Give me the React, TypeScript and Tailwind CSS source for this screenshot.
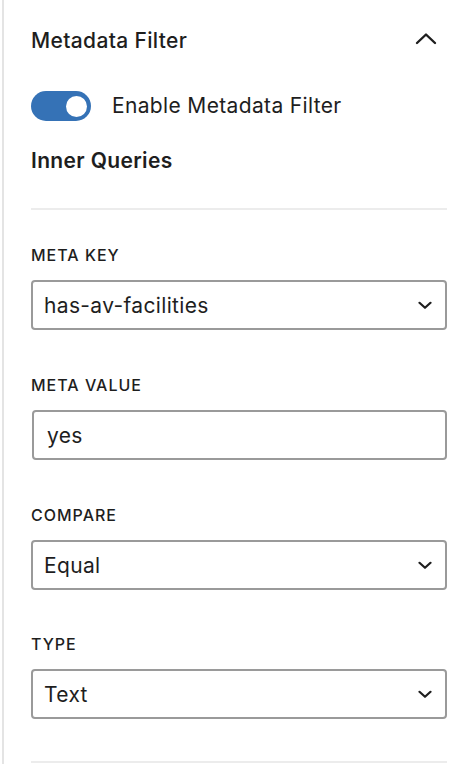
import React from "react";

const font = { fontFamily: "Inter, 'Noto Sans', 'Liberation Sans', sans-serif" };

function ChevronDown() {
  return (
    <svg width="14" height="9" viewBox="0 0 14 9" fill="none" className="shrink-0">
      <path d="M1.5 1.8 L7 6.8 L12.5 1.8" stroke="#1e1e1e" strokeWidth="2.2" strokeLinecap="round" strokeLinejoin="round" />
    </svg>
  );
}

function SelectBox({ value }: { value: string }) {
  return (
    <div className="mt-[15px] h-[50px] rounded-[4px] border-2 border-[#9a9a9a] flex items-center justify-between pl-[11px] pr-[13px]">
      <span className="text-[21px] tracking-[0.35px] text-[#1e1e1e] leading-none">{value}</span>
      <ChevronDown />
    </div>
  );
}

function Label({ children }: { children: React.ReactNode }) {
  return (
    <div className="text-[16px] leading-[20px] font-medium text-[#1e1e1e] uppercase tracking-[1px]">{children}</div>
  );
}

export default function App() {
  return (
    <div className="min-h-screen bg-white flex" style={font}>
      <div className="ml-[2px] border-l-2 border-[#e4e4e4] flex-1 pl-[27px] pr-[27px] min-h-[764px]">
        <div className="pt-[29px] h-[53px] flex items-center justify-between">
          <span className="text-[21px] tracking-[0.35px] leading-[24px] font-medium text-[#1e1e1e]">Metadata Filter</span>
          <svg width="22" height="13" viewBox="0 0 22 13" fill="none" className="mr-[10px] -mt-[6px]">
            <path d="M2 11 L11 2.5 L20 11" stroke="#1e1e1e" strokeWidth="2.4" strokeLinecap="round" strokeLinejoin="round" />
          </svg>
        </div>

        <div className="mt-[38px] flex items-center h-[30px]">
          <div className="w-[60px] h-[30px] rounded-full bg-[#3572b6] flex items-center justify-end pr-[4px]">
            <div className="w-[21px] h-[21px] rounded-full bg-white" />
          </div>
          <span className="ml-[21px] text-[21px] tracking-[0.35px] leading-[24px] text-[#1e1e1e]">Enable Metadata Filter</span>
        </div>

        <div className="mt-[28px] text-[21px] tracking-[0.35px] leading-[24px] font-semibold text-[#1e1e1e]">Inner Queries</div>

        <div className="mt-[35px] h-[2px] bg-[#ececec]" />

        <div className="mt-[35px]">
          <Label>Meta key</Label>
          <SelectBox value="has-av-facilities" />
        </div>

        <div className="mt-[45px]">
          <Label>Meta value</Label>
          <div className="mt-[15px] ml-[1px] h-[50px] rounded-[4px] border-2 border-[#9a9a9a] flex items-center pl-[13px]">
            <span className="text-[21px] tracking-[0.35px] text-[#1e1e1e] leading-none">yes</span>
          </div>
        </div>

        <div className="mt-[45px]">
          <Label>Compare</Label>
          <SelectBox value="Equal" />
        </div>

        <div className="mt-[44px]">
          <Label>Type</Label>
          <SelectBox value="Text" />
        </div>

        <div className="mt-[42px] h-[2px] bg-[#ececec]" />
      </div>
    </div>
  );
}
